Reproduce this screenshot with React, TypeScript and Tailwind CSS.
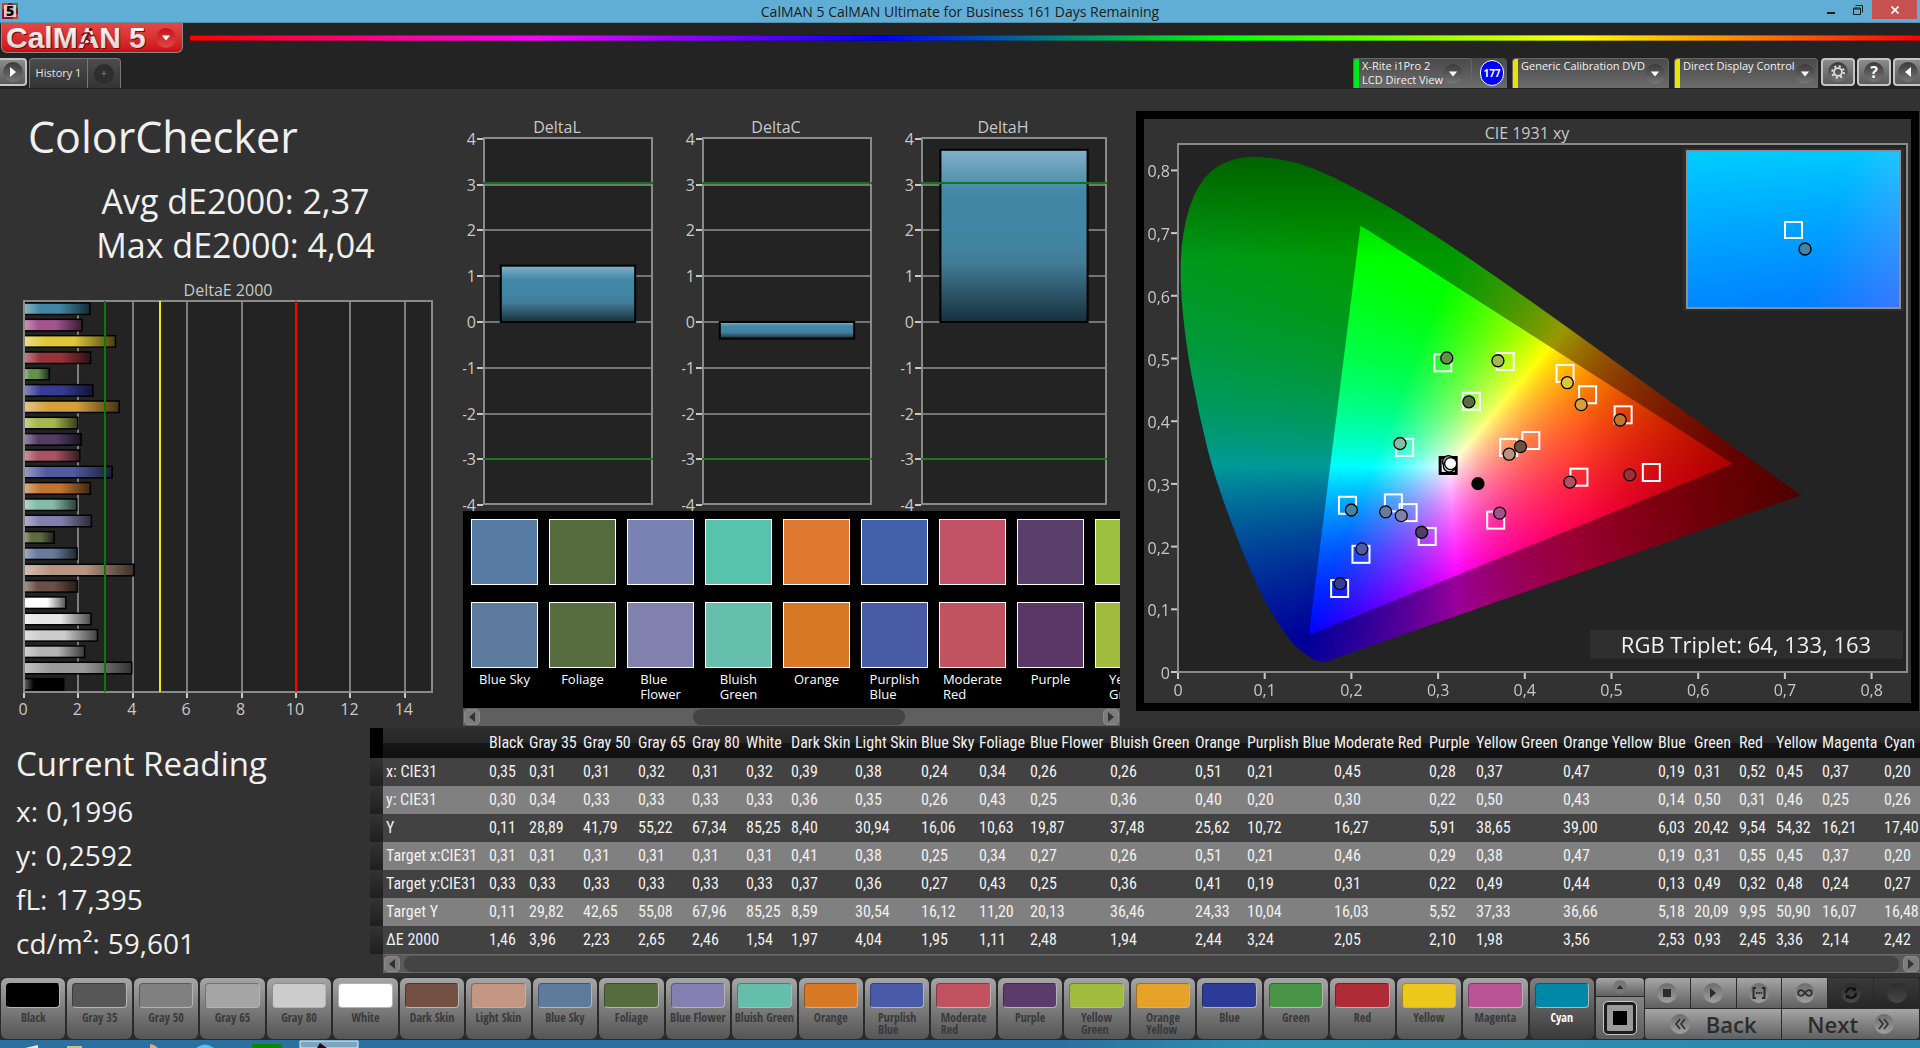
import { useEffect, useRef } from "react";
import type { ReactNode, RefObject } from "react";

type Patch = { name: string; two?: [string, string]; color: string; bar: string; values: string[]; de: number };

const patches: Patch[] = [
  { name: "Black", color: "#000000", bar: "#000000", values: ["0,35", "0,30", "0,11", "0,31", "0,33", "0,11", "1,46"], de: 1.46 },
  { name: "Gray 35", color: "#575757", bar: "#9a9a9a", values: ["0,31", "0,34", "28,89", "0,31", "0,33", "29,82", "3,96"], de: 3.96 },
  { name: "Gray 50", color: "#808080", bar: "#b4b4b4", values: ["0,31", "0,33", "41,79", "0,31", "0,33", "42,65", "2,23"], de: 2.23 },
  { name: "Gray 65", color: "#a5a5a5", bar: "#cccccc", values: ["0,32", "0,33", "55,22", "0,31", "0,33", "55,08", "2,65"], de: 2.7 },
  { name: "Gray 80", color: "#cccccc", bar: "#e6e6e6", values: ["0,31", "0,33", "67,34", "0,31", "0,33", "67,96", "2,46"], de: 2.46 },
  { name: "White", color: "#ffffff", bar: "#ffffff", values: ["0,32", "0,33", "85,25", "0,31", "0,33", "85,25", "1,54"], de: 1.54 },
  { name: "Dark Skin", color: "#735041", bar: "#6b5143", values: ["0,39", "0,36", "8,40", "0,41", "0,37", "8,59", "1,97"], de: 1.97 },
  { name: "Light Skin", color: "#c49782", bar: "#b89580", values: ["0,38", "0,35", "30,94", "0,38", "0,36", "30,54", "4,04"], de: 4.04 },
  { name: "Blue Sky", color: "#5d7b9d", bar: "#667c9b", values: ["0,24", "0,26", "16,06", "0,25", "0,27", "16,12", "1,95"], de: 1.95 },
  { name: "Foliage", color: "#566c3f", bar: "#5c6b42", values: ["0,34", "0,43", "10,63", "0,34", "0,43", "11,20", "1,11"], de: 1.11 },
  { name: "Blue Flower", color: "#8481b2", bar: "#807fae", values: ["0,26", "0,25", "19,87", "0,27", "0,25", "20,13", "2,48"], de: 2.48 },
  { name: "Bluish Green", color: "#65beac", bar: "#84bbaa", values: ["0,26", "0,36", "37,48", "0,26", "0,36", "36,46", "1,94"], de: 1.94 },
  { name: "Orange", color: "#d87925", bar: "#c27530", values: ["0,51", "0,40", "25,62", "0,51", "0,41", "24,33", "2,44"], de: 2.44 },
  { name: "Purplish Blue", two: ["Purplish", "Blue"], color: "#495ba8", bar: "#505ba2", values: ["0,21", "0,20", "10,72", "0,21", "0,19", "10,04", "3,24"], de: 3.24 },
  { name: "Moderate Red", two: ["Moderate", "Red"], color: "#c1525f", bar: "#aa5262", values: ["0,45", "0,30", "16,27", "0,46", "0,31", "16,03", "2,05"], de: 2.05 },
  { name: "Purple", color: "#5c3b6c", bar: "#523d67", values: ["0,28", "0,22", "5,91", "0,29", "0,22", "5,52", "2,10"], de: 2.1 },
  { name: "Yellow Green", two: ["Yellow", "Green"], color: "#9fbc3f", bar: "#a6b84b", values: ["0,37", "0,50", "38,65", "0,38", "0,49", "37,33", "1,98"], de: 1.98 },
  { name: "Orange Yellow", two: ["Orange", "Yellow"], color: "#e4a229", bar: "#d4a03a", values: ["0,47", "0,43", "39,00", "0,47", "0,44", "36,66", "3,56"], de: 3.5 },
  { name: "Blue", color: "#2c3a98", bar: "#363b94", values: ["0,19", "0,14", "6,03", "0,19", "0,13", "5,18", "2,53"], de: 2.53 },
  { name: "Green", color: "#489547", bar: "#61914b", values: ["0,31", "0,50", "20,42", "0,31", "0,49", "20,09", "0,93"], de: 0.93 },
  { name: "Red", color: "#af2b35", bar: "#97313a", values: ["0,52", "0,31", "9,54", "0,55", "0,32", "9,95", "2,45"], de: 2.45 },
  { name: "Yellow", color: "#ecc81c", bar: "#e0c738", values: ["0,45", "0,46", "54,32", "0,45", "0,48", "50,90", "3,36"], de: 3.36 },
  { name: "Magenta", color: "#ba5395", bar: "#a3538f", values: ["0,37", "0,25", "16,21", "0,37", "0,24", "16,07", "2,14"], de: 2.14 },
  { name: "Cyan", color: "#0088a9", bar: "#4085a3", values: ["0,20", "0,26", "17,40", "0,20", "0,27", "16,48", "2,42"], de: 2.42 },
];

const rowNames = ["x: CIE31", "y: CIE31", "Y", "Target x:CIE31", "Target y:CIE31", "Target Y", "ΔE 2000"];

const columnWidths = [13, 103, 40, 54, 55, 54, 54, 45, 64, 66, 58, 51, 80, 85, 52, 87, 95, 47, 87, 95, 36, 45, 37, 46, 62, 39];

const swatches: { lines: string[]; actual: string; target: string }[] = [
  { lines: ["Blue Sky"], actual: "#567aa2", target: "#5d7b9d" },
  { lines: ["Foliage"], actual: "#556b3e", target: "#576d40" },
  { lines: ["Blue", "Flower"], actual: "#7a82b3", target: "#8281ad" },
  { lines: ["Bluish", "Green"], actual: "#58c3ad", target: "#66beac" },
  { lines: ["Orange"], actual: "#df782f", target: "#d67824" },
  { lines: ["Purplish", "Blue"], actual: "#4160a9", target: "#495ba6" },
  { lines: ["Moderate", "Red"], actual: "#c45266", target: "#c1525f" },
  { lines: ["Purple"], actual: "#5a3f6b", target: "#5b3768" },
  { lines: ["Yellow", "Green"], actual: "#9dc03f", target: "#a0bb3d" },
];

const targetPoints: [number, number][] = [
  [0.306, 0.494], [0.378, 0.496], [0.447, 0.477], [0.473, 0.443], [0.339, 0.4325], [0.514, 0.411], [0.262, 0.359],
  [0.382, 0.359], [0.4075, 0.37], [0.463, 0.3115], [0.5465, 0.319], [0.196, 0.2667], [0.249, 0.2705], [0.266, 0.255],
  [0.288, 0.217], [0.367, 0.243], [0.2116, 0.1885], [0.187, 0.134],
];

const readings: [number, number, string][] = [
  [0.31, 0.5025, "#61914b"], [0.369, 0.498, "#a6b84b"], [0.449, 0.463, "#e0c738"], [0.465, 0.428, "#d4a03a"],
  [0.3355, 0.4325, "#5c6b42"], [0.51, 0.4035, "#c27530"], [0.256, 0.366, "#84bbaa"], [0.395, 0.361, "#6b5143"],
  [0.382, 0.349, "#b89580"], [0.452, 0.3045, "#aa5262"], [0.521, 0.316, "#97313a"], [0.346, 0.302, "#000000"],
  [0.2, 0.26, "#4085a3"], [0.2395, 0.257, "#667c9b"], [0.2575, 0.251, "#807fae"], [0.281, 0.2245, "#523d67"],
  [0.371, 0.255, "#a3538f"], [0.212, 0.198, "#505ba2"], [0.187, 0.1425, "#363b94"], [0.312, 0.337, "#9a9a9a"],
  [0.313, 0.33, "#cccccc"], [0.3145, 0.334, "#ffffff"],
];

/* Smoothed spectral locus from the blue end to the red end. */
const locus: [number, number][] = [
  [0.168, 0.011], [0.144, 0.0297], [0.1241, 0.0578], [0.0913, 0.1327], [0.0454, 0.295], [0.0235, 0.4127],
  [0.0072, 0.5384], [0.001, 0.6548], [0.0115, 0.745], [0.036, 0.803], [0.0743, 0.823], [0.1142, 0.82],
  [0.1547, 0.8059], [0.2296, 0.7543], [0.3016, 0.6923], [0.3731, 0.6245],
  [0.4441, 0.5547], [0.5125, 0.4866], [0.5752, 0.4242], [0.627, 0.3725], [0.6915, 0.3083], [0.719, 0.282],
];

function chromaColor(x: number, y: number): [number, number, number] {
  const z = 1 - x - y;
  const r = Math.max(0, 3.2406 * x - 1.5372 * y - 0.4986 * z);
  const g = Math.max(0, -0.9689 * x + 1.8758 * y + 0.0415 * z);
  const b = Math.max(0, 0.0557 * x - 0.204 * y + 1.057 * z);
  const m = Math.max(r, g, b) || 1;
  const red = 1 - 0.5 * Math.min(1, Math.max(0, (x - 0.46) / 0.26));
  const green = 1 - 0.35 * Math.min(1, Math.max(0, (y - 0.66) / 0.16));
  const k = (255 / m) * red * green;
  return [r * k, g * k, b * k];
}

function paint(ctx: CanvasRenderingContext2D, w: number, h: number, at: (px: number, py: number) => [number, number]) {
  const image = ctx.createImageData(w, h);
  for (let py = 0; py < h; py++) {
    for (let px = 0; px < w; px++) {
      const [x, y] = at(px, py);
      const [r, g, b] = chromaColor(x, y);
      const i = (py * w + px) * 4;
      image.data[i] = r;
      image.data[i + 1] = g;
      image.data[i + 2] = b;
      image.data[i + 3] = 255;
    }
  }
  ctx.putImageData(image, 0, 0);
}

function useCanvas(draw: (ctx: CanvasRenderingContext2D) => void): RefObject<HTMLCanvasElement | null> {
  const ref = useRef<HTMLCanvasElement>(null);
  useEffect(() => {
    const ctx = ref.current?.getContext("2d");
    if (ctx) draw(ctx);
  }, []);
  return ref;
}

const UNIT_X = 867;
const UNIT_Y = 627;

function GamutCanvas() {
  const ref = useCanvas((ctx) => {
    const w = 729;
    const h = 528;
    const X = (x: number) => x * UNIT_X;
    const Y = (y: number) => h - y * UNIT_Y;
    paint(ctx, w, h, (px, py) => [px / UNIT_X, (h - py) / UNIT_Y]);
    ctx.fillStyle = "rgba(0,0,0,0.4)";
    ctx.beginPath();
    ctx.rect(0, 0, w, h);
    ctx.moveTo(X(0.2105), Y(0.712));
    ctx.lineTo(X(0.64), Y(0.332));
    ctx.lineTo(X(0.151), Y(0.059));
    ctx.closePath();
    ctx.fill("evenodd");
    ctx.globalCompositeOperation = "destination-in";
    ctx.fillStyle = "#000";
    ctx.beginPath();
    ctx.moveTo(X(0.178), Y(0.02));
    for (let i = 0; i < locus.length - 1; i++) {
      const [ax, ay] = locus[i];
      const [bx, by] = locus[i + 1];
      ctx.quadraticCurveTo(X(ax), Y(ay), X((ax + bx) / 2), Y((ay + by) / 2));
    }
    ctx.lineTo(X(0.719), Y(0.282));
    ctx.closePath();
    ctx.fill();
  });
  return <canvas ref={ref} width={729} height={528} className="block h-full w-full" />;
}

function InsetCanvas() {
  const ref = useCanvas((ctx) => {
    paint(ctx, 212, 155, (px, py) => [0.196 + (px - 106) / 3000, 0.2667 - (py - 78) / 2700]);
  });
  return <canvas ref={ref} width={212} height={155} className="block h-full w-full" />;
}

function CieChart() {
  const X = (x: number) => 34 + x * UNIT_X;
  const Y = (y: number) => 553 - y * UNIT_Y;
  const ticks = [0, 1, 2, 3, 4, 5, 6, 7, 8];
  const label = (n: number) => (n === 0 ? "0" : `0,${n}`);
  return (
    <svg viewBox="0 0 767 584" className="block w-full" role="img" aria-label="CIE 1931 xy chart">
      <text x="383" y="20" textAnchor="middle" fontSize="16" fill="#c8c8c8">CIE 1931 xy</text>
      <rect x="34" y="25" width="729" height="528" fill="#232323" />
      <foreignObject x="34" y="25" width="729" height="528"><GamutCanvas /></foreignObject>
      <rect x="34" y="25" width="729" height="528" fill="none" stroke="#8a8a8a" strokeWidth="2" />
      {ticks.map((n) => (
        <g key={n} fill="#c8c8c8" fontSize="16">
          <rect x={X(n / 10) - 1} y="554" width="2" height="6" />
          <text x={X(n / 10)} y="577" textAnchor="middle">{label(n)}</text>
          <rect x="27" y={Y(n / 10) - 1} width="6" height="2" />
          <text x="26" y={Y(n / 10) + 7} textAnchor="end">{label(n)}</text>
        </g>
      ))}
      {targetPoints.map(([x, y]) => (
        <rect key={`${x}-${y}`} x={X(x) - 9} y={Y(y) - 8} width="17" height="17" fill="none" stroke="#fff" strokeWidth="2" />
      ))}
      <rect x={X(0.3116) - 8} y={Y(0.331) - 7} width="16" height="16" fill="none" stroke="#000" strokeWidth="3" />
      {readings.map(([x, y, fill]) => (
        <circle key={`${x}-${y}`} cx={X(x)} cy={Y(y) + 1} r="6" fill={fill} stroke="#000" strokeWidth="1.3" />
      ))}
      <rect x="539" y="29" width="221" height="163" fill="#2d2d2d" />
      <foreignObject x="544" y="33" width="212" height="155"><InsetCanvas /></foreignObject>
      <rect x="543" y="32" width="213" height="157" fill="none" stroke="#8f8f8f" strokeWidth="2" />
      <rect x="641" y="103" width="17" height="16" fill="none" stroke="#fff" strokeWidth="2" />
      <circle cx="661" cy="130" r="6" fill="#4085a3" stroke="#000" strokeWidth="1.3" />
      <rect x="446" y="511" width="313" height="29" fill="#2e2e2e" />
      <text x="602" y="534" textAnchor="middle" fontSize="22" fill="#f0f0f0">RGB Triplet: 64, 133, 163</text>
    </svg>
  );
}

function DeltaEChart() {
  const unit = 27.2;
  return (
    <svg viewBox="0 0 463 440" className="block w-full" role="img" aria-label="DeltaE 2000 chart">
      <defs>
        <linearGradient id="barShade">
          <stop offset="0" stopColor="#fff" stopOpacity="0.4" />
          <stop offset="0.25" stopColor="#fff" stopOpacity="0" />
          <stop offset="0.55" stopColor="#000" stopOpacity="0" />
          <stop offset="1" stopColor="#000" stopOpacity="0.68" />
        </linearGradient>
      </defs>
      <text x="228" y="16" textAnchor="middle" fontSize="16" fill="#c8c8c8">DeltaE 2000</text>
      <rect x="24" y="21" width="408" height="391" fill="#232323" />
      {[2, 4, 6, 8, 12, 14].map((n) => (
        <rect key={n} x={23 + Math.round(n * unit)} y="21" width="2" height="391" fill="#7d7d7d" />
      ))}
      {[...patches].reverse().map((p, i) => (
        <g key={p.name}>
          <rect x="24" y={23 + i * 16.33} width={p.de * unit} height="11.5" fill={p.bar} />
          <rect x="24" y={23 + i * 16.33} width={p.de * unit} height="11.5" fill="url(#barShade)" stroke="#000" strokeWidth="1.5" />
        </g>
      ))}
      <rect x="24" y="21" width="408" height="391" fill="none" stroke="#8a8a8a" strokeWidth="2" />
      <rect x="104" y="21" width="2" height="391" fill="#0a780a" />
      <rect x="159" y="21" width="2" height="391" fill="#f0e800" />
      <rect x="295" y="21" width="2" height="391" fill="#ff0000" />
      {[0, 2, 4, 6, 8, 10, 12, 14].map((n) => (
        <g key={n} fill="#c8c8c8">
          <rect x={23 + Math.round(n * unit)} y="413" width="2" height="5" />
          <text x={23 + n * unit} y="435" textAnchor="middle" fontSize="16">{n}</text>
        </g>
      ))}
    </svg>
  );
}

function DeltaChart({ title, value, width, id }: { title: string; value: number; width: number; id: string }) {
  const zero = 206;
  const unit = 45.8;
  const top = value > 0 ? zero - value * unit : zero;
  const inset = width * 0.1;
  return (
    <svg viewBox="0 0 219 395" className="block w-full" role="img" aria-label={`${title} chart`}>
      <defs>
        <linearGradient id={id} x1="0" y1="0" x2="0" y2="1">
          <stop offset="0" stopColor="#84b1c8" />
          <stop offset="0.25" stopColor="#4187a6" />
          <stop offset="0.5" stopColor="#4085a3" />
          <stop offset="0.65" stopColor="#437d98" />
          <stop offset="1" stopColor="#17303d" />
        </linearGradient>
      </defs>
      <text x={10 + width / 2} y="17" textAnchor="middle" fontSize="16" fill="#c8c8c8">{title}</text>
      <rect x="21" y="22" width={width} height="366" fill="#232323" />
      {[3, 2, 1, 0, -1, -2, -3].map((n) => (
        <rect key={n} x="21" y={Math.round(zero - n * unit) - 1} width={width} height="2" fill="#757575" />
      ))}
      <rect x={21 + inset} y={top} width={width - inset * 2} height={Math.abs(value) * unit} fill={`url(#${id})`} stroke="#000" strokeWidth="2" />
      <rect x="21" y="22" width={width} height="366" fill="none" stroke="#8a8a8a" strokeWidth="2" />
      <rect x="20" y="66" width={width + 2} height="2" fill="#0c7a12" />
      <rect x="20" y="342" width={width + 2} height="2" fill="#1a7a1a" />
      {[4, 3, 2, 1, 0, -1, -2, -3, -4].map((n) => (
        <g key={n} fill="#c8c8c8">
          <rect x="14" y={Math.round(zero - n * unit) - 1} width="6" height="2" />
          <text x="13" y={zero - n * unit + 6} textAnchor="end" fontSize="16">{n}</text>
        </g>
      ))}
    </svg>
  );
}

function Arrow({ dir, className }: { dir: "left" | "right" | "down" | "up"; className: string }) {
  const d = { left: "M9 1 3 6l6 5z", right: "M3 1l6 5-6 5z", down: "M1 3h10L6 9z", up: "M1 9h10L6 3z" }[dir];
  return <svg viewBox="0 0 12 12" className={className} fill="currentColor" aria-hidden="true"><path d={d} /></svg>;
}

function ScrollButton({ dir }: { dir: "left" | "right" }) {
  return (
    <button aria-label={`Scroll ${dir}`} className="grid h-4 w-4 place-items-center rounded border border-[#8a8a8a] bg-[#7c7c7c] text-[#333]">
      <Arrow dir={dir} className="h-3 w-3" />
    </button>
  );
}

function Swatches() {
  return (
    <div className="bg-black">
      <div className="flex h-[197px] gap-[11px] overflow-hidden pt-2 pl-2">
        {swatches.map((s) => (
          <div key={s.lines.join(" ")} className="flex w-[67px] shrink-0 flex-col items-center text-[13px] leading-[15px] text-white">
            <div className="h-[66px] w-full border border-white" style={{ backgroundColor: s.actual }} />
            <div className="mt-[17px] mb-1 h-[66px] w-full border border-white" style={{ backgroundColor: s.target }} />
            <div>{s.lines.map((l) => <div key={l}>{l}</div>)}</div>
          </div>
        ))}
      </div>
      <div className="flex h-[18px] items-center justify-between bg-[#5f5f5f] px-px">
        <ScrollButton dir="left" />
        <div className="ml-3.5 h-4 w-[212px] rounded-full bg-[#444]" />
        <ScrollButton dir="right" />
      </div>
    </div>
  );
}

function DataTable() {
  return (
    <div className="min-w-0 overflow-hidden">
      <table className="w-full table-fixed border-collapse text-left font-['Roboto_Condensed','Open_Sans',sans-serif] text-base leading-5 whitespace-nowrap text-[#f0f0f0]">
        <colgroup>
          {columnWidths.map((w, i) => <col key={i} style={{ width: `${w}px` }} />)}
        </colgroup>
        <thead>
          <tr className="h-[30px] bg-linear-[#2e2e2e_0%,#262626_50%,#161616_50%,#101010_100%]">
            <td className="bg-black" />
            <td />
            {patches.map((p) => <th key={p.name} scope="col" className="p-0 pl-[3px] font-normal">{p.name}</th>)}
          </tr>
        </thead>
        <tbody>
          {rowNames.map((name, r) => (
            <tr key={name} className="h-7 odd:bg-[#424242] even:bg-[#808080]">
              <td className="bg-linear-to-b from-[#333] to-[#1f1f1f]" />
              <th scope="row" className="p-0 pl-[3px] font-normal">{name}</th>
              {patches.map((p) => <td key={p.name} className="p-0 pl-[3px]">{p.values[r]}</td>)}
            </tr>
          ))}
        </tbody>
      </table>
      <div className="ml-[13px] flex h-[19px] items-center justify-between gap-1 border-y border-[#6a6a6a] bg-[#5a5a5a] px-px">
        <ScrollButton dir="left" />
        <div className="h-4 flex-1 rounded-full bg-[#444]" />
        <ScrollButton dir="right" />
      </div>
    </div>
  );
}

function Knob({ children, className = "" }: { children: ReactNode; className?: string }) {
  return (
    <span className={`grid h-5 w-5 shrink-0 place-items-center rounded-full bg-linear-to-b from-[#3a3a3a] to-[#777] ${className}`}>
      {children}
    </span>
  );
}

function SourceButton({ lines, stripe, width }: { lines: string[]; stripe: string; width: string }) {
  return (
    <button className={`flex h-[30px] items-start overflow-hidden rounded-t border border-b-0 border-[#666] bg-linear-to-b from-[#4a4a4a] to-[#6c6c6c] text-left text-[11px] leading-[14px] text-[#f0f0f0] ${width}`}>
      <span className={`h-full w-[5px] shrink-0 ${stripe}`} />
      <span className="ml-[3px] flex-1 whitespace-nowrap">{lines.map((l) => <span key={l} className="block">{l}</span>)}</span>
      <Knob className="mt-[5px] mr-2.5"><Arrow dir="down" className="h-2.5 w-2.5 text-white" /></Knob>
    </button>
  );
}

const toolButton = "grid h-7 w-[34px] place-items-center rounded border-2 border-[#c4c4c4] bg-linear-to-b from-[#8c8c8c] to-[#5a5a5a] text-white";

function Header() {
  return (
    <header className="bg-[#232323]">
      <div className="grid h-[23px] grid-cols-[1fr_auto_1fr] items-center border-b border-[#4f8fae] bg-[#60aed5]">
        <svg viewBox="0 0 16 16" className="ml-0.5 h-4 w-4 overflow-visible" aria-hidden="true">
          <rect width="16" height="16" fill="#8c1430" />
          <path d="M0 0h6v6H0zM11 11h5v5h-5z" fill="#c8401e" />
          <path d="M10 0h6v6z" fill="#2a8a30" />
          <path d="M2 2h12v12H2z" fill="#f2f2f2" opacity=".8" />
          <text x="8" y="13" fontSize="14" fontWeight="800" textAnchor="middle" fill="#000">5</text>
        </svg>
        <h1 className="pt-px text-center text-sm leading-[21px] text-[#1c1c1c]">CalMAN 5 CalMAN Ultimate for Business 161 Days Remaining</h1>
        <div className="flex items-start justify-end self-start">
          <button aria-label="Minimize" className="grid h-[19px] w-[26px] place-items-center pt-1.5"><span className="h-[2px] w-2 bg-[#1c1c1c]" /></button>
          <button aria-label="Restore" className="grid h-[19px] w-[28px] place-items-center">
            <svg viewBox="0 0 10 10" className="h-2.5 w-2.5" fill="none" stroke="#1c1c1c" aria-hidden="true"><path d="M2.500.5h7v7M.5 3h7v6.500h-7zM.5 4h7" /></svg>
          </button>
          <button aria-label="Close" className="mr-[3px] grid h-[19px] w-[45px] place-items-center bg-[#c75050]">
            <svg viewBox="0 0 8 8" className="h-2 w-2" stroke="#fff" strokeWidth="1.6" aria-hidden="true"><path d="M.5.5l7 7M7.500.5l-7 7" /></svg>
          </button>
        </div>
      </div>
      <div className="flex h-[35px] items-start">
        <button className="ml-px flex h-[30px] w-[182px] items-center gap-1.5 rounded-b-md border border-t-0 border-[#8a8a8a] bg-linear-to-b from-[#e44848] to-[#cc0a10] pl-1">
          <svg viewBox="0 0 144 28" className="h-7 w-36 overflow-visible" aria-hidden="true">
            <defs>
              <linearGradient id="logoFill" x1="0" y1="0" x2="0" y2="1"><stop offset="0" stopColor="#fff" /><stop offset="1" stopColor="#cfcfcf" /></linearGradient>
            </defs>
            <g fontSize="30" fontWeight="700" fontFamily="Liberation Sans">
              <g fill="#7a0a0a"><text x="1" y="25">CalMAN</text><text x="124" y="25">5</text></g>
              <g fill="url(#logoFill)"><text x="0" y="24">CalMAN</text><text x="123" y="24">5</text></g>
            </g>
            <g fill="none" stroke="#7d1111" strokeWidth="1.600" strokeLinecap="round" strokeLinejoin="round">
              <path d="M83 9l-3 5 4 3-2 4M80 14l-2 5h-4M76 11l3-2h4l2 3 3-1" />
            </g>
            <circle cx="84.500" cy="5.500" r="1.800" fill="#7d1111" />
          </svg>
          <span className="grid h-5 w-5 place-items-center rounded-full bg-linear-to-b from-[#c40f14] to-[#e04444]"><Arrow dir="down" className="h-2.5 w-2.5 text-white" /></span>
        </button>
        <div className="mt-3 ml-[7px] h-1.5 flex-1 border-y border-black/30 bg-linear-[90deg,#ff0000,#ff00ff_20%,#0000ff_40%,#00ff00_60%,#ffff00_80%,#ff0000]" />
      </div>
      <div className="flex h-[31px] items-start">
        <button aria-label="Expand" className="grid h-7 w-[27px] place-items-center rounded-r border-2 border-l-0 border-[#c4c4c4] bg-linear-to-b from-[#8c8c8c] to-[#5a5a5a]">
          <Knob><Arrow dir="right" className="h-3 w-3 text-white" /></Knob>
        </button>
        <div className="ml-0.5 flex h-[30px] w-[92px] rounded-t border border-b-0 border-[#777] bg-linear-to-b from-[#4c4c4c] to-[#343434]">
          <button className="flex-1 border-r border-[#777] text-[11px] text-[#e4e4e4]">History 1</button>
          <button aria-label="Add tab" className="grid w-8 place-items-center">
            <span className="grid h-5 w-5 place-items-center rounded-full bg-[#2e2e2e] text-[11px] text-[#8a8a8a]">+</span>
          </button>
        </div>
        <div className="ml-auto flex items-start">
          <div className="mr-[5px] flex h-[30px] items-center rounded-tr bg-linear-to-b from-[#4a4a4a] to-[#6c6c6c]">
            <SourceButton lines={["X-Rite i1Pro 2", "LCD Direct View"]} stripe="bg-[#00e81a]" width="w-[119px]" />
            <button className="mr-[3px] ml-2 grid h-[26px] w-6 place-items-center rounded-full border border-white bg-[#0000ff] text-[10px] font-bold text-white">177</button>
          </div>
          <SourceButton lines={["Generic Calibration DVD"]} stripe="bg-[#e8e400]" width="w-[157px] mr-[5px]" />
          <SourceButton lines={["Direct Display Control"]} stripe="bg-[#e8e400]" width="w-[144px] mr-[3px]" />
          <button aria-label="Settings" className={`${toolButton} mr-0.5`}>
            <Knob>
              <svg viewBox="0 0 16 16" className="h-3.5 w-3.5" fill="none" stroke="#e0e0e0" aria-hidden="true">
                <circle cx="8" cy="8" r="4.500" strokeWidth="2" />
                <circle cx="8" cy="8" r="6.700" strokeWidth="2.200" strokeDasharray="2.500 2.760" />
              </svg>
            </Knob>
          </button>
          <button aria-label="Help" className={`${toolButton} mr-0.5`}><Knob><span className="text-base leading-5 font-bold">?</span></Knob></button>
          <button aria-label="Collapse" className="grid h-7 w-[27px] place-items-center rounded-l border-2 border-r-0 border-[#c4c4c4] bg-linear-to-b from-[#8c8c8c] to-[#5a5a5a]">
            <Knob><Arrow dir="left" className="h-3 w-3 text-white" /></Knob>
          </button>
        </div>
      </div>
    </header>
  );
}

const light = "bg-linear-to-b from-[#a6a6a6] to-[#606060] text-[#2c2c2c]";
const disc = "grid h-5 w-5 place-items-center rounded-full bg-linear-to-b from-[#6c6c6c] to-[#a0a0a0]";
const darkDisc = "grid h-5 w-5 place-items-center rounded-full bg-linear-to-b from-[#2c2c2c] to-[#484848]";

function Footer() {
  return (
    <footer className="flex h-[63px] bg-[#2a2a2a] p-px">
      <div className="grid flex-1 grid-cols-24 gap-0.5">
        {patches.map((p) => {
          const on = p.name === "Cyan";
          return (
            <button key={p.name} className={`flex flex-col items-center rounded-md px-[5px] pt-[5px] font-['Open_Sans_Condensed','Open_Sans',sans-serif] text-xs leading-3 font-bold whitespace-nowrap ${on ? "bg-linear-to-b from-[#808080] to-[#3a3a3a] text-white" : "bg-linear-to-b from-[#a6a6a6] to-[#555] text-[#3a3a3a]"}`}>
              <span className="mb-1 h-[25px] w-full shrink-0 rounded border border-t-black/30 border-r-[#b4b4b4] border-b-[#b4b4b4] border-l-black/30" style={{ backgroundColor: p.color }} />
              <span className="text-left">{(p.two ?? [p.name]).map((l) => <span key={l} className="block">{l}</span>)}</span>
            </button>
          );
        })}
      </div>
      <div className="ml-0.5 flex w-12 flex-col gap-px">
        <button aria-label="Up" className={`grid h-[18px] place-items-center rounded-t ${light}`}><span className="grid h-3.5 w-3.5 place-items-center rounded-full bg-[#777]"><Arrow dir="up" className="h-2 w-2" /></span></button>
        <button aria-label="Patch window" className="grid flex-1 place-items-center rounded-b bg-linear-to-b from-[#858585] to-[#5c5c5c]">
          <span className="grid h-8 w-8 place-items-center rounded border-3 border-[#1c1c1c] bg-[#9a9a9a] outline outline-[#c8c8c8]"><span className="h-3.5 w-3.5 bg-black" /></span>
        </button>
      </div>
      <div className="ml-px grid w-[274px] grid-cols-6 grid-rows-2 gap-px">
        <button aria-label="Stop" className={`grid place-items-center rounded-tl ${light}`}><span className={disc}><span className="h-2 w-2 bg-[#2c2c2c]" /></span></button>
        <button aria-label="Play" className={`grid place-items-center ${light}`}><span className={disc}><Arrow dir="right" className="h-3 w-3" /></span></button>
        <button aria-label="Range" className={`grid place-items-center ${light}`}><span className={disc}>
          <svg viewBox="0 0 14 12" className="h-3 w-3.5" fill="none" stroke="#2c2c2c" strokeWidth="2" aria-hidden="true"><path d="M4 1H1.500v10H4M10 1h2.500v10H10M4 6h1.500M6.200 6h1.600M8.600 6h1.500" /></svg>
        </span></button>
        <button aria-label="Loop" className={`grid place-items-center ${light}`}><span className={disc}>
          <svg viewBox="0 0 16 8" className="h-2 w-4" fill="none" stroke="#2c2c2c" strokeWidth="1.800" aria-hidden="true"><path d="M8 4C6.500 2 5.500 1.200 4 1.200a2.800 2.800 0 000 5.600C5.500 6.800 6.500 6 8 4s2.500-2.800 4-2.800a2.800 2.800 0 010 5.600C10.500 6.800 9.500 6 8 4z" /></svg>
        </span></button>
        <button aria-label="Refresh" className="grid place-items-center bg-linear-to-b from-[#3a3a3a] to-[#262626]"><span className={darkDisc}>
          <svg viewBox="0 0 14 14" className="h-3.5 w-3.5" fill="none" stroke="#111" strokeWidth="2.200" aria-hidden="true"><path d="M2 7a5 5 0 018.500-3.500M12 7a5 5 0 01-8.500 3.500" /><path d="M12 1v4H8zM2 13V9h4z" fill="#111" stroke="none" /></svg>
        </span></button>
        <button aria-label="Disabled" className="grid place-items-center rounded-tr bg-linear-to-b from-[#3a3a3a] to-[#262626]"><span className={darkDisc} /></button>
        <button className={`col-span-3 flex items-center justify-center gap-4 rounded-bl text-[22px] leading-7 font-semibold ${light}`}>
          <span className={disc}><svg viewBox="0 0 12 12" className="h-3 w-3" fill="none" stroke="#2c2c2c" strokeWidth="1.500" aria-hidden="true"><path d="M6 1L2 6l4 5M11 1L7 6l4 5" /></svg></span>
          Back
        </button>
        <button className={`col-span-3 flex items-center justify-center gap-4 rounded-br text-[22px] leading-7 font-semibold ${light}`}>
          Next
          <span className={disc}><svg viewBox="0 0 12 12" className="h-3 w-3" fill="none" stroke="#2c2c2c" strokeWidth="1.500" aria-hidden="true"><path d="M1 1l4 5-4 5M6 1l4 5-4 5" /></svg></span>
        </button>
      </div>
    </footer>
  );
}

function Taskbar() {
  return (
    <div className="flex h-2 items-end bg-linear-[90deg,#2a70a0_0%,#2a70a0_55%,#2f90b2_66%,#2d86ac_100%]">
      <svg viewBox="0 0 360 8" className="h-2 w-[360px]" aria-hidden="true">
        <path d="M25 8l13-3v3z" fill="#dfe9f0" />
        <rect x="67" y="6" width="15" height="2" fill="#c8c08c" />
        <path d="M150 8V4l4 1 4 3z" fill="#e0aa78" />
        <path d="M196 8q9-7 18 0z" fill="#58c0ee" />
        <rect x="252" y="4" width="30" height="4" fill="#068a06" />
        <path d="M300 8V1h58v7z" fill="#7ba6c2" stroke="#e8f0f5" />
        <path d="M317 8l3-5 7 5z" fill="#2a0a0e" />
      </svg>
    </div>
  );
}

export default function App() {
  return (
    <div className="overflow-hidden bg-[#323232] font-['Open_Sans','Noto_Sans',sans-serif] text-[#f0f0f0]">
      <Header />
      <main className="pb-1">
        <div className="grid grid-cols-[minmax(0,463fr)_minmax(0,657fr)_minmax(0,800fr)]">
          <section>
            <h2 className="pt-5 pl-7 text-[43px] leading-[56px]">ColorChecker</h2>
            <div className="pt-3.5 pb-[13px] pl-2 text-center text-[34px] leading-[44px]">
              <p>Avg dE2000: 2,37</p>
              <p>Max dE2000: 4,04</p>
            </div>
            <DeltaEChart />
          </section>
          <section className="pt-[27px]">
            <div className="grid grid-cols-3">
              <DeltaChart id="deltaL" title="DeltaL" value={1.23} width={168} />
              <DeltaChart id="deltaC" title="DeltaC" value={-0.36} width={168} />
              <DeltaChart id="deltaH" title="DeltaH" value={3.76} width={184} />
            </div>
            <Swatches />
          </section>
          <section className="pt-[22px] pr-px pl-4">
            <div className="border-8 border-black"><CieChart /></div>
          </section>
        </div>
        <div className="mt-0.5 grid grid-cols-[minmax(0,370fr)_minmax(0,1550fr)]">
          <section className="pt-3.5 pl-4">
            <h2 className="mb-[3px] text-[33px] leading-[44px]">Current Reading</h2>
            <dl className="text-[28px] leading-[44px]">
              {[["x", "0,1996"], ["y", "0,2592"], ["fL", "17,395"], ["cd/m²", "59,601"]].map(([k, v]) => (
                <div key={k} className="flex gap-2"><dt>{k}:</dt><dd>{v}</dd></div>
              ))}
            </dl>
          </section>
          <DataTable />
        </div>
      </main>
      <Footer />
      <Taskbar />
    </div>
  );
}
